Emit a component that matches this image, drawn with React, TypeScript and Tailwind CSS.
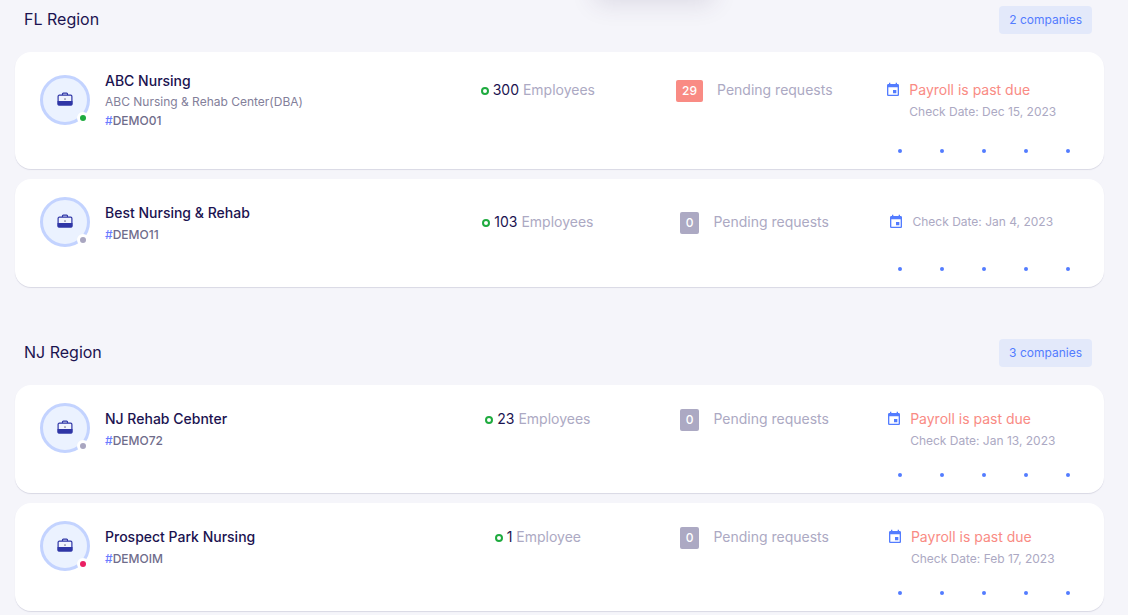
import { MdEvent } from "react-icons/md";

type Status = "active" | "idle" | "alert";

interface Company {
  name: string;
  dba?: string;
  code: string;
  status: Status;
  employees: number;
  pending: number;
  pastDue: boolean;
  checkDate: string;
}

interface Region {
  name: string;
  total: number;
  companies: Company[];
}

const regions: Region[] = [
  {
    name: "FL Region",
    total: 2,
    companies: [
      {
        name: "ABC Nursing",
        dba: "ABC Nursing & Rehab Center(DBA)",
        code: "DEMO01",
        status: "active",
        employees: 300,
        pending: 29,
        pastDue: true,
        checkDate: "Dec 15, 2023",
      },
      {
        name: "Best Nursing & Rehab",
        code: "DEMO11",
        status: "idle",
        employees: 103,
        pending: 0,
        pastDue: false,
        checkDate: "Jan 4, 2023",
      },
    ],
  },
  {
    name: "NJ Region",
    total: 3,
    companies: [
      {
        name: "NJ Rehab Cebnter",
        code: "DEMO72",
        status: "idle",
        employees: 23,
        pending: 0,
        pastDue: true,
        checkDate: "Jan 13, 2023",
      },
      {
        name: "Prospect Park Nursing",
        code: "DEMOIM",
        status: "alert",
        employees: 1,
        pending: 0,
        pastDue: true,
        checkDate: "Feb 17, 2023",
      },
    ],
  },
];

const statusColor: Record<Status, string> = {
  active: "bg-[#1fab3f]",
  idle: "bg-[#a9a6c0]",
  alert: "bg-[#ea1f63]",
};

function BriefcaseIcon() {
  return (
    <svg width="16" height="16" viewBox="0 1 16 16" fill="none" aria-hidden="true">
      <path d="M5.5 4V3c0-.5.3-.9.9-.9h3.2c.6 0 .9.4.9.9v1" stroke="#2f36a6" strokeWidth="1.2" />
      <rect x="1.1" y="4.2" width="13.8" height="9.8" rx="1.2" fill="#f1f4fd" stroke="#2f36a6" strokeWidth="1.2" />
      <path d="M.5 10h15v3.2c0 .9-.5 1.4-1.4 1.4H1.9c-.9 0-1.4-.5-1.4-1.4z" fill="#2f36a6" />
      <rect x="7.2" y="7.2" width="1.6" height="1.8" fill="#9c9cae" />
    </svg>
  );
}

function Avatar({ status }: { status: Status }) {
  return (
    <div className="relative flex size-[50px] shrink-0 items-center justify-center rounded-full border-3 border-[#c3d3ff] bg-[#ebf2ff]">
      <BriefcaseIcon />
      <span className="absolute -right-0.5 -bottom-0.5 flex size-3 items-center justify-center rounded-full bg-white">
        <span className={`size-1.5 rounded-full ${statusColor[status]}`} />
      </span>
    </div>
  );
}

function CompanyCard({ company }: { company: Company }) {
  const statsPadding = !company.pastDue ? "pt-0" : company.dba ? "pt-0.5" : "pt-1";

  return (
    <article className="rounded-[16px] bg-white pb-4 shadow-[0_1px_1px_#d9d9e4]">
      <div
        className={`grid grid-cols-[9fr_15fr] items-center px-[25px] ${company.dba ? "h-[97px]" : "h-[88px]"}`}
      >
        <div className="flex items-center gap-[15px] pb-0.5">
          <Avatar status={company.status} />
          <div className={company.dba ? "pt-0" : "pt-0.5"}>
            <h3 className="text-[14px] leading-6 font-medium text-[#1b1350]">{company.name}</h3>
            {company.dba && <p className="text-[12px] leading-[18px] text-[#83809a]">{company.dba}</p>}
            <p className="text-[12px] leading-5 font-medium text-[#6f6c8b]">
              <a href={`#${company.code}`}>
                <span className="text-[#6b7cff]">#</span>
                {company.code}
              </a>
            </p>
          </div>
        </div>

        <div
          className={`grid grid-cols-3 items-start text-[14px] leading-5 text-[#aca9c3] ${statsPadding}`}
        >
          <div className="flex items-center justify-center gap-1">
            <span className="size-2 rounded-full border-2 border-[#1fab3f]" />
            <span className="pb-0.5">
              <span className="text-[#1b1350]">{company.employees}</span>{" "}
              {company.employees === 1 ? "Employee" : "Employees"}
            </span>
          </div>

          <div className="flex items-center justify-center gap-3.5">
            <span
              className={`rounded-[2px] px-1.5 text-[12px] leading-[22px] font-medium text-white ${
                company.pending > 0 ? "bg-[#f98b84]" : "bg-[#aca9c3]"
              }`}
            >
              {company.pending}
            </span>
            <span className="pb-0.5">Pending requests</span>
          </div>

          <div className="flex justify-center gap-2">
            <MdEvent className="mt-[2px] size-4 shrink-0 text-[#537cff]" />
            <div>
              {company.pastDue && <p className="pb-0.5 text-[#f98b84]">Payroll is past due</p>}
              <p className="pb-0.5 text-[12px] leading-5">Check Date: {company.checkDate}</p>
            </div>
          </div>
        </div>
      </div>

      <div className="flex justify-end px-[15px]">
        {[1, 2, 3, 4, 5].map((step) => (
          <div key={step} className="flex w-[42px] justify-center">
            <span className="size-1 rounded-full bg-[#537cff]" />
          </div>
        ))}
      </div>
    </article>
  );
}

export default function App() {
  return (
    <main className="relative min-h-screen overflow-hidden bg-[#f5f5fa] pt-1.5 pr-6 pl-[15px] font-['Inter',sans-serif]">
      <div className="absolute -top-10 left-[594px] h-9 w-[120px] rounded-lg shadow-[0_8px_24px_rgba(60,50,90,0.13)]" />
      <div className="flex flex-col gap-[52px]">
        {regions.map((region) => (
          <section key={region.name}>
            <header className="mb-[18px] flex items-center justify-between pr-3 pl-[9px]">
              <h2 className="pb-0.5 text-[16px] leading-6 text-[#1b1350]">{region.name}</h2>
              <span className="rounded-[4px] bg-[#e3e9fa] px-2.5 text-[12px] leading-7 text-[#537cff]">
                {region.total} companies
              </span>
            </header>
            <div className="flex flex-col gap-2.5">
              {region.companies.map((company) => (
                <CompanyCard key={company.code} company={company} />
              ))}
            </div>
          </section>
        ))}
      </div>
    </main>
  );
}
